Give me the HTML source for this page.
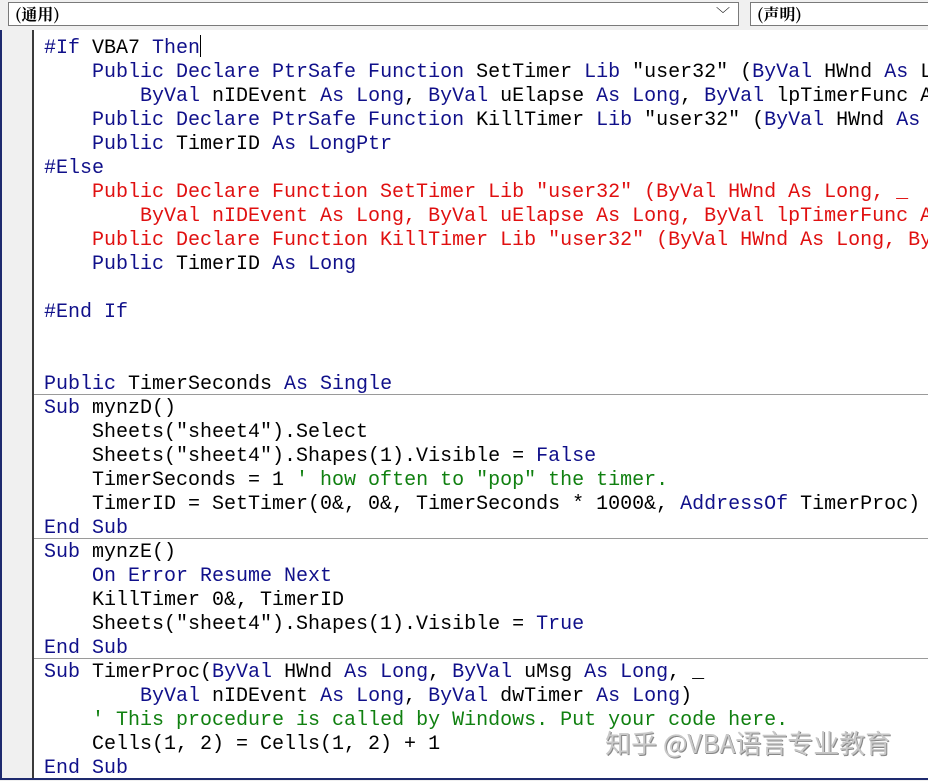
<!DOCTYPE html>
<html><head><meta charset="utf-8"><style>
body{margin:0;width:928px;height:780px;overflow:hidden;background:#f0f0f0;position:relative;font-family:"Liberation Mono","Noto Sans CJK SC",monospace}
.cb{position:absolute;top:2px;height:24px;background:#fff;border:1px solid #7a7a7a;box-sizing:border-box;font-family:"Noto Serif CJK SC","Noto Sans CJK SC",serif;font-weight:bold;font-size:16px;line-height:22px;padding-left:6px;color:#000}
#frame{position:absolute;left:0;top:30px;width:928px;height:750px;border-left:2px solid #1e2a6e;border-bottom:2px solid #1e2a6e;box-sizing:border-box;background:#fff}
#gutter{position:absolute;left:0;top:0;width:30px;height:100%;background:#f0f0f0;border-right:2px solid #3a3a3a}
pre{position:absolute;left:42px;top:5px;margin:0;font-family:"Liberation Mono",monospace;font-size:20px;line-height:24px;color:#000;white-space:pre}
.b{color:#10108a}.r{color:#e01010}.g{color:#108010}
.sep{position:absolute;left:32px;right:0;height:1px;background:#9a9a9a}
.wm{position:absolute;left:605px;top:724px;font-family:"Noto Sans CJK SC",sans-serif;font-size:26px;color:#c8c8c8;text-shadow:1px 1px 0 #888}
.cur{display:inline-block;width:1px;height:22px;background:#000;vertical-align:-4px}
</style></head><body>
<div class="cb" style="left:8px;width:731px">(通用)<span style="position:absolute;right:8px;top:0;font-weight:normal;font-size:14px">﹀</span></div>
<div class="cb" style="left:750px;width:182px">(声明)</div>
<div id="frame">
<div id="gutter"></div>
<div class="sep" style="top:364px"></div>
<div class="sep" style="top:508px"></div>
<div class="sep" style="top:628px"></div>
<pre><span class="b">#If</span> VBA7 <span class="b">Then</span><span class="cur"></span>
    <span class="b">Public Declare PtrSafe Function</span> SetTimer <span class="b">Lib</span> "user32" (<span class="b">ByVal</span> HWnd <span class="b">As</span> L
        <span class="b">ByVal</span> nIDEvent <span class="b">As Long</span>, <span class="b">ByVal</span> uElapse <span class="b">As Long</span>, <span class="b">ByVal</span> lpTimerFunc A
    <span class="b">Public Declare PtrSafe Function</span> KillTimer <span class="b">Lib</span> "user32" (<span class="b">ByVal</span> HWnd <span class="b">As</span>
    <span class="b">Public</span> TimerID <span class="b">As</span> <span class="b">LongPtr</span>
<span class="b">#Else</span>
<span class="r">    Public Declare Function SetTimer Lib "user32" (ByVal HWnd As Long, _
        ByVal nIDEvent As Long, ByVal uElapse As Long, ByVal lpTimerFunc A
    Public Declare Function KillTimer Lib "user32" (ByVal HWnd As Long, By</span>
    <span class="b">Public</span> TimerID <span class="b">As Long</span>

<span class="b">#End If</span>


<span class="b">Public</span> TimerSeconds <span class="b">As Single</span>
<span class="b">Sub</span> mynzD()
    Sheets("sheet4").Select
    Sheets("sheet4").Shapes(1).Visible = <span class="b">False</span>
    TimerSeconds = 1 <span class="g">' how often to "pop" the timer.</span>
    TimerID = SetTimer(0&amp;, 0&amp;, TimerSeconds * 1000&amp;, <span class="b">AddressOf</span> TimerProc)
<span class="b">End Sub</span>
<span class="b">Sub</span> mynzE()
    <span class="b">On Error Resume Next</span>
    KillTimer 0&amp;, TimerID
    Sheets("sheet4").Shapes(1).Visible = <span class="b">True</span>
<span class="b">End Sub</span>
<span class="b">Sub</span> TimerProc(<span class="b">ByVal</span> HWnd <span class="b">As Long</span>, <span class="b">ByVal</span> uMsg <span class="b">As Long</span>, _
        <span class="b">ByVal</span> nIDEvent <span class="b">As Long</span>, <span class="b">ByVal</span> dwTimer <span class="b">As Long</span>)
    <span class="g">' This procedure is called by Windows. Put your code here.</span>
    Cells(1, 2) = Cells(1, 2) + 1
<span class="b">End Sub</span></pre>
</div>
<div class="wm">知乎 @VBA语言专业教育</div>
</body></html>
